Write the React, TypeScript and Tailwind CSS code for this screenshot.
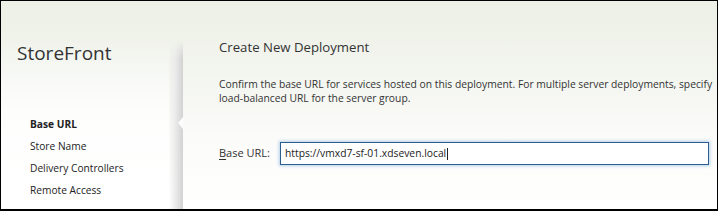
import React from "react";

const navItems = [
  { label: "Base URL", active: true },
  { label: "Store Name" },
  { label: "Delivery Controllers" },
  { label: "Remote Access" },
];

export default function App() {
  return (
    <div
      className="box-border flex h-[211px] w-[718px] overflow-hidden border border-b-2 border-black bg-[linear-gradient(to_bottom,#edf0e6_0%,#f3f5ef_35%,#fbfbf9_65%,#ffffff_100%)] text-[#333]"
      style={{ fontFamily: '"Open Sans", "Noto Sans", sans-serif' }}
    >
      {/* Left: wizard steps */}
      <aside className="mt-[39px] flex w-[182px] shrink-0">
        <div className="flex-1 bg-[linear-gradient(to_bottom,rgba(255,255,255,0)_0%,rgba(255,255,255,0.7)_40%,#ffffff_100%)] pl-4">
          <h1 className="mt-[2px] text-[19px] leading-[22px] text-[#333]">StoreFront</h1>
          <ul className="mt-[49px] pl-[13px] text-[10.2px] leading-[22px] text-[#222]">
            {navItems.map((item) => (
              <li key={item.label} className={item.active ? "font-bold" : ""}>
                {item.label}
              </li>
            ))}
          </ul>
        </div>
        <div className="relative w-[14px] bg-[linear-gradient(to_right,rgba(240,240,240,0)_0%,#ebebeb_45%,#d2d2d2_100%)] [mask-image:linear-gradient(to_bottom,transparent_0px,black_18px)]">
          <span className="absolute right-0 top-[77px] h-0 w-0 border-y-[6px] border-r-[5px] border-y-transparent border-r-[#fcfcfc]" />
        </div>
      </aside>

      {/* Right: step content */}
      <main className="min-w-0 flex-1 pl-[36px] pt-[37px]">
        <h2 className="text-[13.2px] leading-[19px] text-[#333]">Create New Deployment</h2>
        <p className="mt-[20px] whitespace-nowrap text-[10.3px] leading-[14px] text-[#333]">
          Confirm the base URL for services hosted on this deployment. For multiple server deployments, specify
          <br />
          load-balanced URL for the server group.
        </p>
        <div className="mt-[37px] flex items-center">
          <label className="w-[61px] text-[11px] text-[#333]">
            <span className="underline underline-offset-2">B</span>ase URL:
          </label>
          <div className="flex h-[23px] w-[429px] items-center border border-[#2c5d8f] bg-white pl-[4px] text-[10.3px] text-[#222] shadow-[0_0_3px_1px_rgba(90,150,210,0.45)]">
            https://vmxd7-sf-01.xdseven.local
            <span className="ml-[1px] h-[12px] w-px bg-[#222]" />
          </div>
        </div>
      </main>
    </div>
  );
}
